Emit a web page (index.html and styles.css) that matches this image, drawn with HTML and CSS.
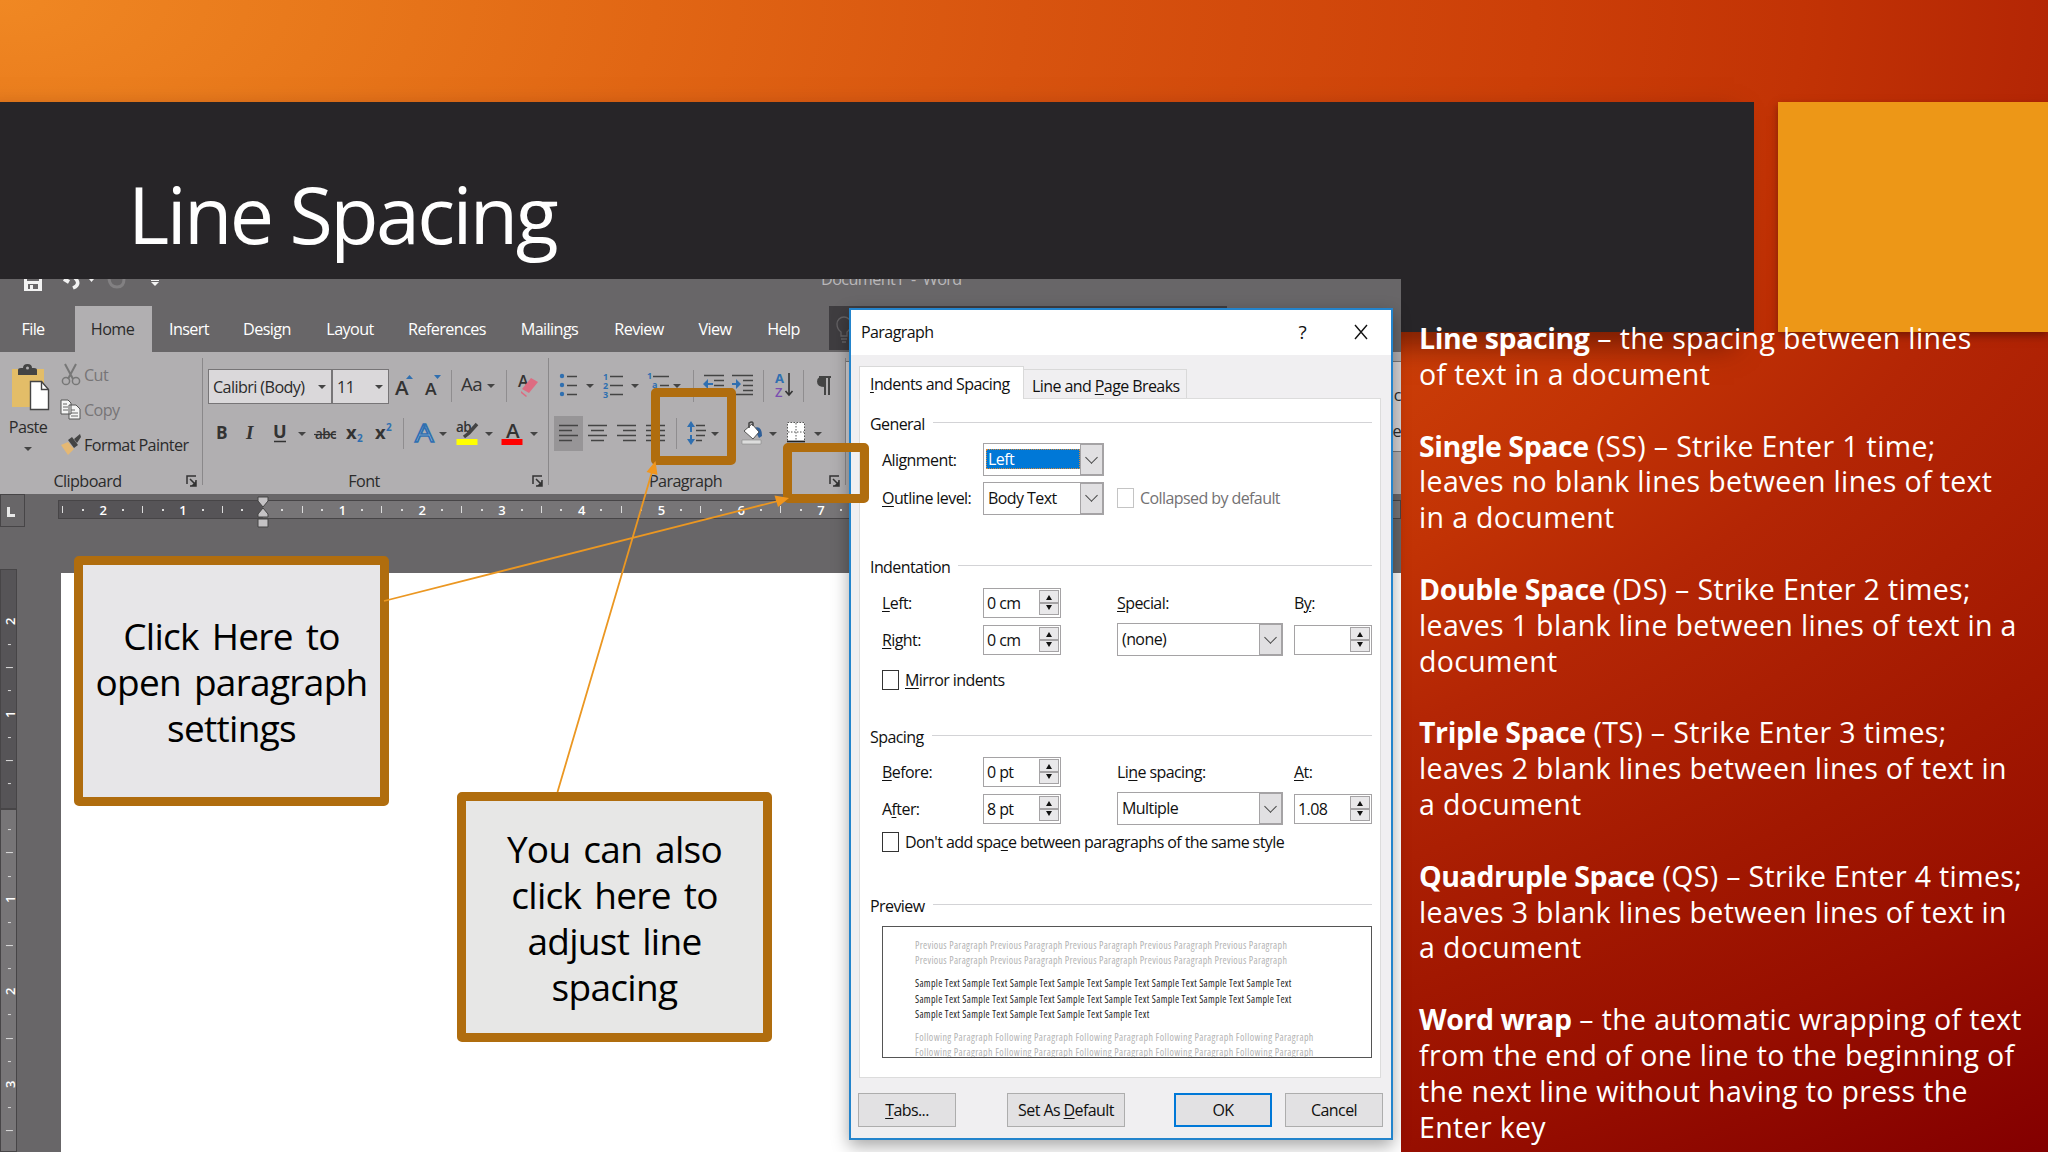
FILE: index.html
```html
<!DOCTYPE html>
<html lang="en">
<head>
  <meta charset="UTF-8">
  <title>Line Spacing</title>
  <link rel="stylesheet" href="styles.css">
</head>
<body>
<div class="slide">
  <div class="title-bar"><h1>Line Spacing</h1></div>
  <div class="accent"></div>

  <div class="word">
    <div class="word-title">
      <svg width="180" height="27" viewBox="0 279 180 27">
        <path d="M24 275h18v16H24z" fill="#f2f2f2"/><path d="M27 275h12v6H27zM28 284h10v5H28z" fill="#686668"/><path d="M30 285h3v4h-3z" fill="#f2f2f2"/>
        <path d="M64 279l5 3" stroke="#f2f2f2" stroke-width="4"/><path d="M74 277q8 7-1 11" fill="none" stroke="#f2f2f2" stroke-width="3.5"/>
        <path d="M89 279h5l-2.500 3z" fill="#f2f2f2"/>
        <path d="M109 279q1 8 8 8t7-8" fill="none" stroke="#828082" stroke-width="3"/>
        <path d="M151 280h8v1h-8zM151 282h8l-4 4z" fill="#f2f2f2"/>
      </svg>
      <span class="doc-name">Document1 &nbsp;- &nbsp;Word</span>
    </div>
    <div class="tabs">
      <span class="tab-file">File</span><span class="active">Home</span><span>Insert</span><span>Design</span><span>Layout</span><span>References</span><span>Mailings</span><span>Review</span><span>View</span><span>Help</span>
      <div class="tell-me">
        <svg width="24" height="34" viewBox="0 0 24 34"><path d="M9 22v-4q-4-3-4-8a7 7 0 0 1 14 0q0 5-4 8v4zM9 25h6M10 28h4" fill="none" stroke="#656365" stroke-width="1.300"/></svg>
      </div>
    </div>

    <div class="ribbon">
      <div class="group clipboard">
        <div class="clip-tools">
          <div class="paste">
            <svg width="56" height="60" viewBox="0 355 56 60">
              <path d="M12 369h32v38H12z" fill="#e3bd68"/>
              <path d="M18 375v-5q0-2 3-2h2q0-4 4.500-4t4.500 4h2q3 0 3 2v5z" fill="#444"/><circle cx="27.500" cy="368" r="1.500" fill="#b1afb1"/>
              <path d="M30.500 381.500h11l7 8v20h-18z" fill="#fff" stroke="#444" stroke-width="1.400"/><path d="M41.500 381.500v8h7" fill="none" stroke="#444" stroke-width="1.400"/>
            </svg>
            <span>Paste</span>
            <i class="arrow"></i>
          </div>
          <div class="clip-list">
            <div class="off"><svg width="22" height="26" viewBox="0 0 22 26"><path d="M5 2l8 15M16 2L8 17" stroke="#777" stroke-width="2"/><circle cx="6" cy="19" r="3.600" fill="none" stroke="#777" stroke-width="1.500"/><circle cx="16" cy="19" r="3.600" fill="none" stroke="#777" stroke-width="1.500"/></svg><span>Cut</span></div>
            <div class="off"><svg width="22" height="26" viewBox="0 0 22 26"><path d="M1 3h7l3 3v11H1zM9 8h7l4 4v10H9z" fill="#f5f5f5" stroke="#555"/><path d="M3 7h4M3 10h5M3 13h5M11 13h4M11 16h7M11 19h7" stroke="#666"/></svg><span>Copy</span></div>
            <div><svg width="22" height="26" viewBox="0 0 22 26"><path d="M1 13l7-3 6 7-6 6z" fill="#e5b873"/><path d="M8 8l4-3 6 8-4 3zM14 7l6-5 1 3-4 6z" fill="#444"/></svg><span>Format Painter</span></div>
          </div>
        </div>
        <div class="group-name"><span>Clipboard</span><svg class="launch" width="12" height="13" viewBox="0 0 12 13"><path d="M1 9V1h9M4 4l5 5M10 5v6H4" fill="none" stroke="#333" stroke-width="1.500"/><path d="M10 6v5H5z" fill="#333"/></svg></div>
      </div>

      <div class="group font">
        <div class="tool-row">
          <div class="font-box name">Calibri (Body)<i class="arrow"></i></div>
          <div class="font-box size">11<i class="arrow"></i></div>
          <svg width="159" height="46" viewBox="389 360 159 46">
            <text x="396" y="395" class="ic" font-weight="600" font-size="20" textLength="13" lengthAdjust="spacingAndGlyphs">A</text><path d="M407 379h7l-3.500-4z" fill="#2f6fb0"/>
            <text x="426" y="395" class="ic" font-weight="600" font-size="17" textLength="11" lengthAdjust="spacingAndGlyphs">A</text><path d="M435 375h7l-3.500 4z" fill="#2f6fb0"/>
            <path d="M452.500 370v32M507.500 370v32" stroke="#8f8d8f"/>
            <text x="462" y="391" class="ic" font-size="18" textLength="21" lengthAdjust="spacingAndGlyphs">Aa</text><path d="M488 384h8l-4 4z" fill="#444"/>
            <text x="519" y="387" class="ic" font-weight="600" font-size="16" textLength="10" lengthAdjust="spacingAndGlyphs">A</text><path d="M523 389l9-11 7 4-9 11z" fill="#dd6b81"/><path d="M522 391l6 5-1 1-5-4z" fill="#dd6b81"/>
          </svg>
        </div>
        <div class="tool-row">
          <svg width="346" height="46" viewBox="202 410 346 46">
            <text x="216" y="439" class="ic" font-weight="700" font-size="18" textLength="11" lengthAdjust="spacingAndGlyphs">B</text>
            <text x="246" y="439" class="ic it" font-size="19">I</text>
            <text x="273" y="438" class="ic" font-weight="700" font-size="17" textLength="13" lengthAdjust="spacingAndGlyphs">U</text><path d="M274 441.500h12" stroke="#333" stroke-width="1.500"/>
            <path d="M298 432h8l-4 4z" fill="#444"/>
            <text x="315" y="439" class="ic" font-size="14" font-weight="600" textLength="21" lengthAdjust="spacingAndGlyphs">abc</text><path d="M314 434.500h22" stroke="#333" stroke-width="1.200"/>
            <text x="346" y="439" class="ic" font-weight="700" font-size="17" textLength="10" lengthAdjust="spacingAndGlyphs">x</text><text x="357" y="442" font-size="10" class="blue">2</text>
            <text x="375" y="439" class="ic" font-weight="700" font-size="17" textLength="10" lengthAdjust="spacingAndGlyphs">x</text><text x="386" y="431" font-size="10" class="blue">2</text>
            <path d="M403.500 418v31" stroke="#8f8d8f"/>
            <text x="415" y="442" font-size="25" class="glow" textLength="18" lengthAdjust="spacingAndGlyphs">A</text><path d="M439 432h8l-4 4z" fill="#444"/>
            <text x="456" y="432" class="ic" font-size="14" font-weight="600" textLength="15" lengthAdjust="spacingAndGlyphs">ab</text><path d="M477 424l-8 9-5 4" stroke="#444" stroke-width="3.500" fill="none"/><path d="M456.500 439h21v6h-21z" fill="#ff0"/><path d="M485 432h8l-4 4z" fill="#444"/>
            <text x="506" y="438" class="ic" font-weight="600" font-size="20" textLength="13" lengthAdjust="spacingAndGlyphs">A</text><path d="M501.500 439h21v6h-21z" fill="#f00"/><path d="M530 432h8l-4 4z" fill="#444"/>
          </svg>
        </div>
        <div class="group-name"><span>Font</span><svg class="launch" width="12" height="13" viewBox="0 0 12 13"><path d="M1 9V1h9M4 4l5 5M10 5v6H4" fill="none" stroke="#333" stroke-width="1.500"/><path d="M10 6v5H5z" fill="#333"/></svg></div>
      </div>

      <div class="group para">
        <div class="tool-row">
          <svg width="296" height="46" viewBox="549 360 296 46">
            <g fill="#2f6fb0"><circle cx="562" cy="376" r="2.200"/><circle cx="562" cy="385" r="2.200"/><circle cx="562" cy="394" r="2.200"/></g>
            <path d="M567 376.500h10M567 385.500h10M567 394.500h10M610 376.500h13M610 385.500h13M610 394.500h13" stroke="#444" stroke-width="1.500"/>
            <path d="M586 384h8l-4 4zM631 384h8l-4 4zM673 384h8l-4 4z" fill="#444"/>
            <g class="blue" font-size="9"><text x="603" y="380">1</text><text x="603" y="389">2</text><text x="603" y="398">3</text><text x="647" y="379">1</text><text x="652" y="388">a</text></g>
            <path d="M653 376.500h16M660 385.500h9" stroke="#444" stroke-width="1.500"/>
            <path d="M693.500 370v32M763.500 370v32M803.500 370v32" stroke="#8f8d8f"/>
            <path d="M704 375.500h20M714 380.500h10M714 385.500h10M714 390.500h10M704 394.500h20M732 375.500h21M743 380.500h10M743 385.500h10M743 390.500h10M732 394.500h21" stroke="#444" stroke-width="1.400"/>
            <path d="M713 383h-5v-4l-5 5 5 5v-4h5zM732 383h4v-4l5 5-5 5v-4h-4z" fill="#2f6fb0"/>
            <text x="775" y="383" class="blue" font-size="13">A</text><text x="775" y="397" font-size="13" fill="#7a4fb0" font-weight="600">Z</text>
            <path d="M789 373v21M785.500 391l3.500 4 3.500-4" fill="none" stroke="#333" stroke-width="1.600"/>
            <path d="M825 377v18M829 377v18M819 377h12" stroke="#444" stroke-width="2"/><path d="M825 376q-8 0-8 5.500t8 5.500z" fill="#444"/>
          </svg>
        </div>
        <div class="tool-row">
          <svg width="296" height="46" viewBox="549 410 296 46">
            <path d="M554 416h29v35h-29z" fill="#979597"/>
            <path d="M559 425.500h19M559 430.500h13M559 435.500h19M559 440.500h13 M588 425.500h19M591 430.500h13M588 435.500h19M591 440.500h13 M617 425.500h19M623 430.500h13M617 435.500h19M623 440.500h13 M646 425.500h19M646 430.500h19M646 435.500h19M646 440.500h19" stroke="#444" stroke-width="1.500"/>
            <path d="M676.500 418v31" stroke="#8f8d8f"/>
            <path d="M691 425v7M691 435v6" stroke="#2f6fb0" stroke-width="2"/><path d="M687 427l4-6 4 6zM687 439l4 6 4-6z" fill="#2f6fb0"/>
            <path d="M696 425.500h9M696 430.500h10M696 435.500h9M696 440.500h6" stroke="#444" stroke-width="1.500"/>
            <path d="M711 432h8l-4 4zM769 432h8l-4 4zM814 432h8l-4 4z" fill="#444"/>
            <path d="M754 428q8-3 8 8l-3 2z" fill="#2f5f98"/><path d="M744 431l8-7 7 8-6 7z" fill="#fff" stroke="#555"/><path d="M749 428v-5q3-2 4 0v3" stroke="#444" fill="none" stroke-width="1.500"/><path d="M742 440h19v4h-19z" fill="#ddd" stroke="#888" stroke-width=".6"/>
            <path d="M787.500 422.500h17v18h-17z" fill="#fff"/><path d="M787.500 422.500h17v19h-17zM796 423v18M788 432h16" fill="none" stroke="#555" stroke-dasharray="1.500 1.500"/><path d="M787 441.500h18" stroke="#222" stroke-width="1.600"/>
          </svg>
        </div>
        <div class="group-name"><span>Paragraph</span><svg class="launch" width="12" height="13" viewBox="0 0 12 13"><path d="M1 9V1h9M4 4l5 5M10 5v6H4" fill="none" stroke="#333" stroke-width="1.500"/><path d="M10 6v5H5z" fill="#333"/></svg></div>
      </div>
      <div class="gallery"><span>c</span><span>e</span></div>
    </div>

    <div class="ruler-row">
      <div class="tab-stop"><i></i></div>
      <div class="ruler" id="hruler"></div>
      <svg class="indent" width="12" height="36" viewBox="0 0 12 36"><path d="M1 2h10v4l-5 6-5-6z M6 13l5 6v3H1v-3z M1 24h10v8H1z" fill="#c4c2c4" stroke="#444"/></svg>
    </div>
    <div class="doc-area">
      <div class="vruler" id="vruler"></div>
      <div class="page"></div>
    </div>
  </div>

  <div class="dialog">
    <div class="dlg-title">
      <span>Paragraph</span>
      <span class="help">?</span>
      <svg width="14" height="16" viewBox="0 0 14 16"><path d="M1 1l12 14M13 1L1 15" stroke="#111" stroke-width="1.400"/></svg>
    </div>
    <div class="dlg-tabs"><span class="on"><u>I</u>ndents and Spacing</span><span class="tab2">Line and <u>P</u>age Breaks</span></div>
    <div class="panel">
      <div class="legend">General</div>
      <div class="row"><label>Ali<u>g</u>nment:</label><div class="select short"><span class="picked">Left</span><b></b></div></div>
      <div class="row outline"><label><u>O</u>utline level:</label><div class="select short"><span>Body Text</span><b></b></div><div class="check grey"><i></i>Collapsed by default</div></div>
      <div class="legend indentation">Indentation</div>
      <div class="row"><label><u>L</u>eft:</label><div class="spin"><span>0 cm</span><b></b></div><label><u>S</u>pecial:</label><label>B<u>y</u>:</label></div>
      <div class="row"><label><u>R</u>ight:</label><div class="spin"><span>0 cm</span><b></b></div><div class="select"><span>(none)</span><b></b></div><div class="spin"><span></span><b></b></div></div>
      <div class="check mirror"><i></i><span><u>M</u>irror indents</span></div>
      <div class="legend spacing">Spacing</div>
      <div class="row"><label><u>B</u>efore:</label><div class="spin"><span>0 pt</span><b></b></div><label>Li<u>n</u>e spacing:</label><label><u>A</u>t:</label></div>
      <div class="row"><label>A<u>f</u>ter:</label><div class="spin"><span>8 pt</span><b></b></div><div class="select"><span>Multiple</span><b></b></div><div class="spin"><span>1.08</span><b></b></div></div>
      <div class="check same"><i></i><span>Don't add spa<u>c</u>e between paragraphs of the same style</span></div>
      <div class="legend preview-name">Preview</div>
      <div class="preview">
        <p>Previous Paragraph Previous Paragraph Previous Paragraph Previous Paragraph Previous Paragraph<br>Previous Paragraph Previous Paragraph Previous Paragraph Previous Paragraph Previous Paragraph</p>
        <p class="sample">Sample Text Sample Text Sample Text Sample Text Sample Text Sample Text Sample Text Sample Text<br>Sample Text Sample Text Sample Text Sample Text Sample Text Sample Text Sample Text Sample Text<br>Sample Text Sample Text Sample Text Sample Text Sample Text</p>
        <p class="following">Following Paragraph Following Paragraph Following Paragraph Following Paragraph Following Paragraph<br>Following Paragraph Following Paragraph Following Paragraph Following Paragraph Following Paragraph</p>
      </div>
    </div>
    <div class="buttons">
      <span class="btn"><span><u>T</u>abs...</span></span>
      <span class="btn wide"><span>Set As <u>D</u>efault</span></span>
      <span class="btn ok">OK</span>
      <span class="btn">Cancel</span>
    </div>
  </div>

  <div class="notes">
    <p><b>Line spacing</b> – the spacing between lines<br>of text in a document</p>
    <p><b>Single Space</b> (SS) – Strike Enter 1 time;<br>leaves no blank lines between lines of text<br>in a document</p>
    <p><b>Double Space</b> (DS) – Strike Enter 2 times;<br>leaves 1 blank line between lines of text in a<br>document</p>
    <p><b>Triple Space</b> (TS) – Strike Enter 3 times;<br>leaves 2 blank lines between lines of text in<br>a document</p>
    <p><b>Quadruple Space</b> (QS) – Strike Enter 4 times;<br>leaves 3 blank lines between lines of text in<br>a document</p>
    <p><b>Word wrap</b> – the automatic wrapping of text<br>from the end of one line to the beginning of<br>the next line without having to press the<br>Enter key</p>
  </div>

  <div class="marker mark-spacing"></div>
  <div class="marker mark-launch"></div>
  <div class="callout call-open">Click Here to<br>open paragraph<br>settings</div>
  <div class="callout call-adjust">You can also<br>click here to<br>adjust line<br>spacing</div>
  <svg class="arrows" width="2048" height="1152" viewBox="0 0 2048 1152">
    <g stroke="#eb9722" stroke-width="1.800"><path d="M384 601L778 501M557.500 792L652 472"/></g>
    <path d="M789 498L774.500 495.500 778 507zM655.500 461L646.500 472 657.500 475z" fill="#f0961e"/>
  </svg>
</div>

<script>
  // ruler marks: a number every 4th step, a bar every 2nd, a dot between
  function marks(id, from, to) {
    const ruler = document.getElementById(id);
    for (let i = from; i <= to; i++) {
      const cell = document.createElement('span');
      if (i % 4 === 0) {
        cell.innerText = i === 0 ? '' : Math.abs(i / 4);
      } else {
        cell.className = i % 2 === 0 ? 'bar' : 'dot';
      }
      ruler.appendChild(cell);
    }
  }
  marks('hruler', -10, 29);
  marks('vruler', -8, 15);
</script>
</body>
</html>
```
FILE: styles.css
```css
* {
  box-sizing: border-box;
}
body {
  margin: 0;
  font-family: "Open Sans", "Noto Sans", sans-serif;
}
h1, p {
  margin: 0;
}
svg {
  display: block;
  flex: none;
}
.slide {
  position: relative;
  width: 2048px;
  height: 1152px;
  overflow: hidden;
  background: radial-gradient(2048px 1000px at 0 0, #f08823 0, #e8781b 16%, #e16614 32%, #d8540f 50%, #cc3f08 75%, #c23305 88%, #b42605 100%, #a21801 120%, #980f00 133%, #840000 152%);
}

/* slide shapes */
.title-bar {
  position: absolute;
  left: 0;
  top: 102px;
  width: 1754px;
  height: 230px;
  padding: 58px 0 0 128px;
  background: #272528;
  box-shadow: -20px 14px 26px rgba(60, 10, 0, 0.55);
}
h1 {
  font-size: 79px;
  line-height: 108px;
  font-weight: 400;
  letter-spacing: -2.600px;
  color: #fff;
}
.accent {
  position: absolute;
  left: 1778px;
  top: 102px;
  width: 270px;
  height: 230px;
  background: #ed9717;
  box-shadow: 0 4px 8px rgba(60, 10, 0, 0.5);
}
.notes {
  position: absolute;
  left: 1419px;
  top: 321px;
  color: #fff;
  font-size: 28.500px;
  line-height: 35.850px;
  letter-spacing: 0.350px;
  white-space: nowrap;
}
.notes p {
  margin-bottom: 35.850px;
}
.notes b {
  font-weight: 700;
  letter-spacing: -0.400px;
}
.marker {
  position: absolute;
  border: 9px solid #b06d0e;
  border-radius: 5px;
}
.mark-spacing {
  left: 651px;
  top: 388px;
  width: 85px;
  height: 77px;
}
.mark-launch {
  left: 783px;
  top: 443px;
  width: 86px;
  height: 60px;
}
.callout {
  position: absolute;
  display: flex;
  align-items: center;
  justify-content: center;
  width: 315px;
  height: 250px;
  padding-top: 2px;
  border: 9px solid #b06d0e;
  border-radius: 5px;
  background: #e7e6e8;
  color: #000;
  font-size: 37px;
  line-height: 46.100px;
  letter-spacing: -0.700px;
  word-spacing: 4px;
  text-align: center;
  white-space: nowrap;
}
.call-open {
  left: 74px;
  top: 556px;
}
.call-adjust {
  left: 457px;
  top: 792px;
  background: #e7e7e6;
}
.arrows {
  position: absolute;
  left: 0;
  top: 0;
}

/* word window */
.word {
  position: absolute;
  left: 0;
  top: 279px;
  width: 1401px;
  height: 873px;
  overflow: hidden;
  background: #686668;
  color: #2b2b2b;
  font-size: 16.200px;
  letter-spacing: -0.600px;
  white-space: nowrap;
}
.word-title {
  display: flex;
  height: 27px;
}
.doc-name {
  margin: -11px 0 0 641px;
  line-height: 22px;
  color: #b9b7b9;
}
.tabs {
  display: grid;
  grid-template-columns: 75px 77px 74px 82px 84px 110px 95px 84px 68px 80px 398px;
  height: 46px;
  line-height: 46px;
  text-align: center;
  color: #fff;
}
.tabs .tab-file {
  padding-right: 9px;
}
.tabs .active {
  padding-right: 2px;
  background: #b1afb1;
  color: #2b2b2b;
}
.tabs span:nth-child(10) {
  padding-right: 11px;
}
.tell-me {
  height: 44px;
  padding: 8px 0 0 3px;
  background: #3f3d40;
}
.ribbon {
  display: flex;
  height: 142px;
  background: #b1afb1;
}
.group {
  position: relative;
  display: flex;
  flex-direction: column;
  padding-top: 8px;
}
.group::after {
  content: "";
  position: absolute;
  right: 0;
  top: 6px;
  width: 1px;
  height: 127px;
  background: #8a888a;
}
.clipboard {
  width: 203px;
}
.font {
  width: 346px;
}
.para {
  width: 297px;
}
.clip-tools {
  display: flex;
  height: 108px;
  margin-top: -5px;
}
.paste {
  display: flex;
  flex-direction: column;
  align-items: center;
  width: 56px;
  line-height: 22px;
}
.paste svg {
  margin-bottom: 1px;
}
.clip-list {
  padding: 2px 0 0 4px;
}
.clip-list div {
  display: flex;
  align-items: center;
  gap: 2px;
  height: 35px;
}
.off {
  color: #777577;
}
.arrow {
  width: 0;
  border: 4px solid transparent;
  border-top-color: #444;
  border-bottom: 0;
}
.paste .arrow {
  margin-top: 9px;
}
.group-name {
  display: flex;
  align-items: center;
  justify-content: center;
  height: 24px;
}
.clipboard .group-name {
  margin-top: 6px;
  padding-right: 3px;
}
.font .group-name,
.para .group-name {
  margin-top: 13px;
}
.group-name span {
  flex: 1;
  text-align: center;
  padding-left: 4px;
}
.clipboard .group-name span {
  padding: 0 11px 0 0;
}
.font .group-name span,
.para .group-name span {
  padding-right: 11px;
}
.launch {
  margin-right: 5px;
}
.clipboard .launch {
  margin-right: 2px;
}
.tool-row {
  display: flex;
  height: 46px;
  margin-bottom: 4px;
}
.tool-row + .tool-row {
  margin-bottom: 0;
}
.group .tool-row svg {
  margin-left: -1px;
}
.para .tool-row svg {
  margin-left: 0;
}
.font-box {
  display: flex;
  align-items: center;
  justify-content: space-between;
  height: 35px;
  margin-top: 9px;
  padding: 0 5px 0 4px;
  border: 1px solid #777577;
  background: #dad8da;
}
.font-box.name {
  width: 124px;
  margin-left: 5px;
}
.font-box.size {
  width: 57px;
}
.ic {
  fill: #333;
}
.it {
  font-family: "Liberation Serif", serif;
  font-style: italic;
  font-weight: 700;
}
.blue {
  fill: #2f6fb0;
  font-weight: 700;
}
.glow {
  fill: #dce8f5;
  stroke: #2f6fb0;
  stroke-width: 1.500px;
}
.gallery {
  display: flex;
  flex-direction: column;
  gap: 14px;
  flex: 1;
  height: 91px;
  margin-top: 9px;
  padding-top: 22px;
  border-top: 1px solid #777;
  border-bottom: 1px solid #777;
  background: #d5d3d5;
  text-align: right;
  line-height: 22px;
}

/* rulers */
.ruler-row {
  position: relative;
  display: flex;
  height: 75px;
  color: #fff;
  font-size: 13px;
  font-weight: 600;
}
.tab-stop {
  width: 25px;
  height: 33px;
  padding: 4px 4px 5px 0;
  border: 1px solid #474547;
}
.tab-stop i {
  display: block;
  width: 8px;
  height: 10px;
  margin: 8px 0 0 6px;
  border-left: 3px solid #e8e8e8;
  border-bottom: 3px solid #e8e8e8;
}
.ruler {
  display: flex;
  height: 19px;
  width: 1343px;
  margin: 6px 0 0 33px;
  border: 1px solid #474547;
  background: linear-gradient(90deg, #565457 204px, #777577 204px);
  overflow: hidden;
}
.ruler span {
  display: flex;
  flex: none;
  align-items: center;
  justify-content: center;
  width: 19.940px;
}
.ruler span:first-child {
  margin-left: -6px;
}
.ruler .bar::before,
.ruler .dot::before {
  content: "";
  width: 1px;
  height: 7px;
  background: #dcdcdc;
}
.ruler .dot::before {
  width: 2px;
  height: 2px;
}
.indent {
  position: absolute;
  left: 257px;
  top: 1px;
}
.doc-area {
  display: flex;
  height: 583px;
}
.vruler {
  width: 17px;
  height: 583px;
  padding-top: 40px;
  border: 1px solid #474547;
  background: linear-gradient(#565457 238px, #474547 238px, #474547 240px, #777577 240px);
  color: #fff;
  font-size: 13px;
  font-weight: 600;
  overflow: hidden;
}
.vruler span {
  display: flex;
  align-items: center;
  justify-content: center;
  width: 17px;
  height: 23.150px;
  transform: rotate(-90deg);
}
.vruler .bar::before,
.vruler .dot::before {
  content: "";
  width: 1px;
  height: 7px;
  background: #dcdcdc;
}
.vruler .dot::before {
  height: 3px;
}
.page {
  flex: 1;
  margin: 4px 0 0 44px;
  background: #fff;
}

/* paragraph dialog */
.dialog {
  position: absolute;
  left: 849px;
  top: 308px;
  width: 544px;
  height: 832px;
  border: 2px solid #2384cc;
  background: #f0eff1;
  box-shadow: 0 6px 16px rgba(0, 0, 0, 0.35);
  color: #101010;
  font-size: 16px;
  line-height: 22px;
  letter-spacing: -0.580px;
  white-space: nowrap;
}
.dlg-title {
  display: flex;
  align-items: center;
  height: 45px;
  padding: 0 23px 2px 10px;
  background: #fff;
}
.dlg-title .help {
  margin: 0 48px 0 auto;
  font-size: 19px;
}
.dlg-tabs {
  display: flex;
  align-items: flex-end;
  height: 43px;
  padding-left: 8px;
}
.dlg-tabs span {
  height: 29px;
  width: 163px;
  padding: 5px 0 0 8px;
  border: 1px solid #d9d9d9;
  border-left: 0;
  border-bottom: 0;
}
.dlg-tabs .on {
  position: relative;
  z-index: 1;
  height: 33px;
  width: 165px;
  margin-bottom: -1px;
  padding: 6px 0 0 10px;
  border-left: 1px solid #d9d9d9;
  background: #fff;
}
u {
  text-underline-offset: 2px;
  text-decoration-thickness: 1px;
}
.panel {
  width: 522px;
  height: 680px;
  margin-left: 8px;
  padding-top: 8px;
  border: 1px solid #dcdcdc;
  background: #fff;
}
.legend {
  display: flex;
  align-items: center;
  gap: 8px;
  height: 34px;
  padding: 0 8px 0 10px;
}
.legend::after {
  content: "";
  flex: 1;
  height: 1px;
  margin-top: -3px;
  background: #d3d3d6;
}
.row {
  display: grid;
  grid-template-columns: 101px 134px 177px 78px;
  align-items: center;
  height: 37px;
  padding-left: 22px;
}
.row.outline {
  height: 40px;
}
.select,
.spin {
  display: flex;
  justify-content: space-between;
  border: 1.500px solid #a5a3a5;
  background: #fff;
}
.select {
  width: 166px;
  height: 33px;
}
.select.short {
  width: 121px;
}
.select span {
  padding: 4px 0 0 4px;
}
.select .picked {
  width: 94px;
  height: 20px;
  margin: 5px 0 0 2px;
  padding: 0 0 0 1px;
  border: 1px dotted #d98a3a;
  line-height: 19px;
  background: #0078d7;
  color: #fff;
}
.select b {
  display: flex;
  align-items: center;
  justify-content: center;
  width: 23px;
  border: 1px solid #a5a3a5;
  background: #e1e0e2;
}
.select b::before {
  content: "";
  width: 8px;
  height: 8px;
  margin-top: -5px;
  border: solid #444;
  border-width: 0 1.500px 1.500px 0;
  transform: rotate(45deg);
}
.spin {
  width: 78px;
  height: 30px;
}
.spin span {
  padding: 3px 0 0 3px;
}
.spin b {
  display: flex;
  flex-direction: column;
  align-items: center;
  justify-content: space-between;
  width: 20px;
  margin: 1px 1px 2px 0;
  padding: 4px 0;
  border: 1px solid #a5a3a5;
  background: linear-gradient(#e9e8ea 11px, #a5a3a5 11px, #a5a3a5 13px, #e9e8ea 13px);
}
.spin b::before,
.spin b::after {
  content: "";
  border: 3.500px solid transparent;
  border-top: 0;
  border-bottom: 5px solid #111;
}
.spin b::after {
  border-top: 5px solid #111;
  border-bottom: 0;
}
.check {
  display: flex;
  align-items: center;
  gap: 6px;
}
.check i {
  width: 17px;
  height: 20px;
  border: 1.500px solid #333;
  background: #fff;
}
.check.grey {
  color: #737173;
}
.check.grey i {
  border-color: #c4c4c4;
}
.indentation {
  margin-top: 32px;
}
.mirror {
  height: 36px;
  margin-top: 4px;
  padding-left: 22px;
}
.spacing {
  height: 32px;
  margin-top: 23px;
}
.same {
  height: 29px;
  padding-left: 22px;
}
.preview-name {
  height: 32px;
  margin-top: 34px;
}
.preview {
  width: 490px;
  height: 132px;
  margin: 4px 0 0 22px;
  padding: 11px 0 0 32px;
  border: 1.500px solid #555;
  overflow: hidden;
  color: #b3b3b3;
  font-size: 10px;
  font-stretch: 75%;
  line-height: 15.200px;
  letter-spacing: 0.320px;
}
.preview .sample {
  margin: 8px 0;
  color: #1c1c1c;
}
.preview .following {
  letter-spacing: 0.390px;
}
.buttons {
  display: flex;
  padding: 15px 0 0 7px;
}
.btn {
  display: flex;
  align-items: center;
  justify-content: center;
  width: 98px;
  height: 34px;
  border: 1px solid #adadad;
  background: #e2e1e3;
}
.btn.wide {
  width: 118px;
  margin: 0 49px 0 51px;
}
.btn.ok {
  margin-right: 13px;
  border: 2px solid #0078d7;
}
```
